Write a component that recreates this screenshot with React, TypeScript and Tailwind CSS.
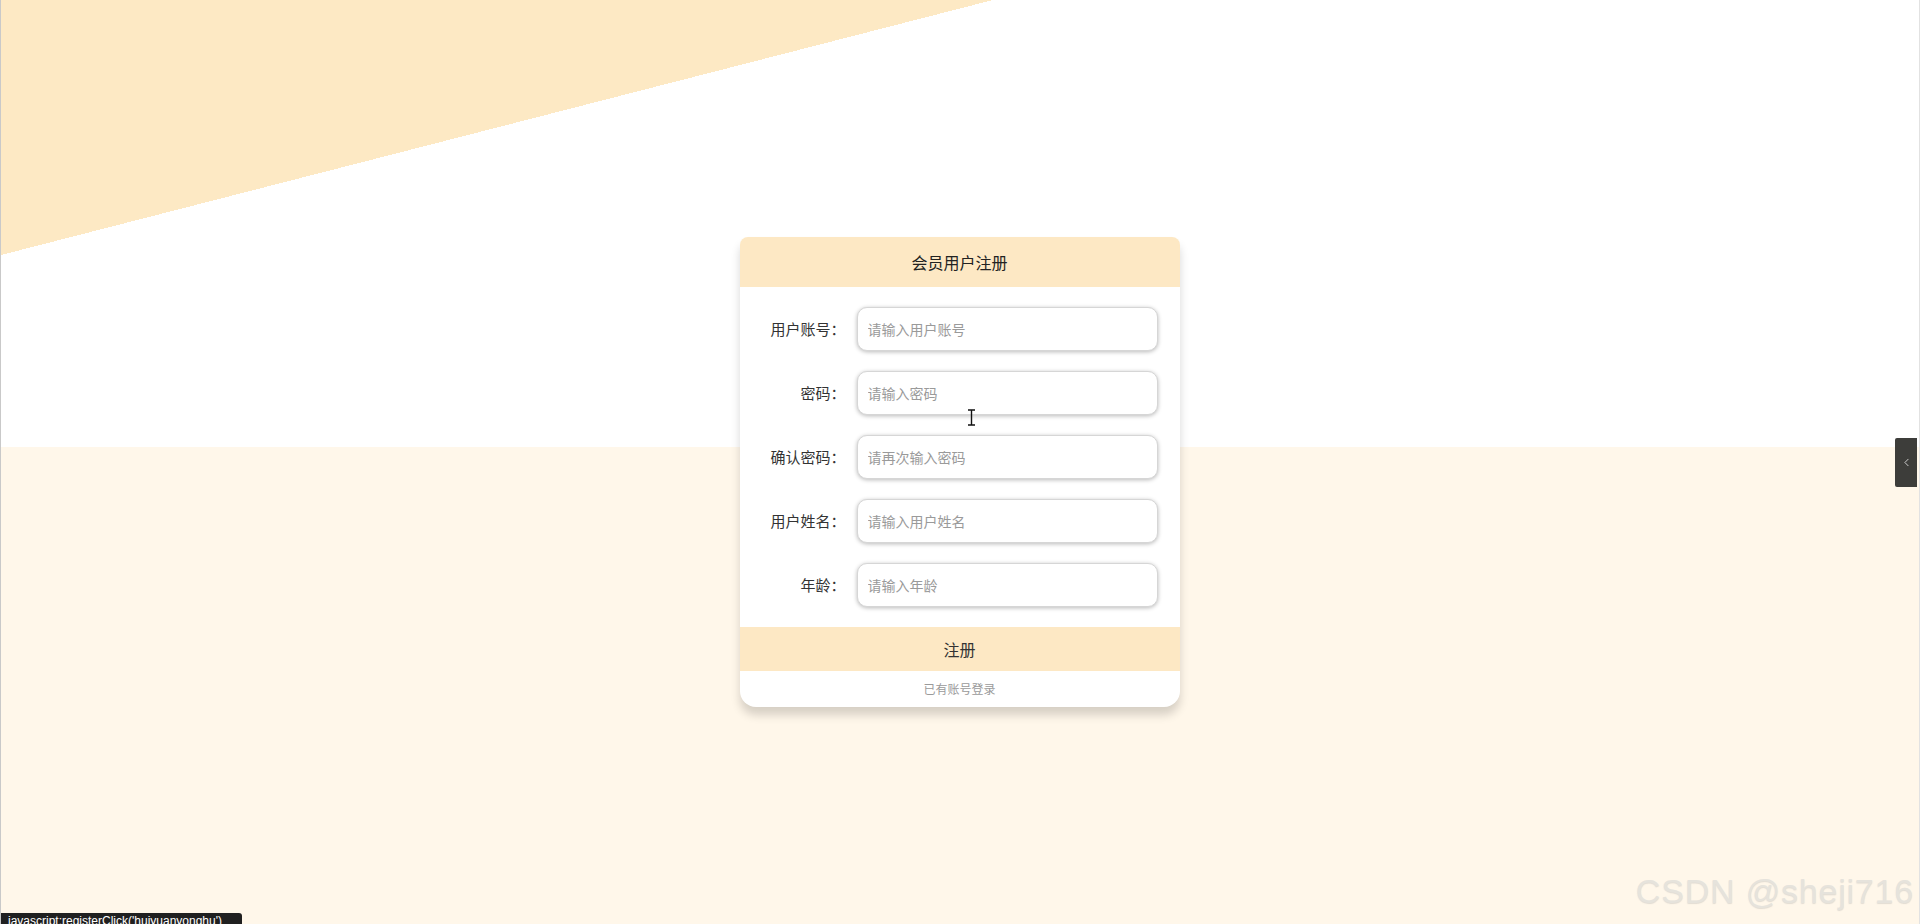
import React from "react";
import { ChevronLeft } from "lucide-react";

const fields = [
  { label: "用户账号：", placeholder: "请输入用户账号", type: "text" },
  { label: "密码：", placeholder: "请输入密码", type: "password" },
  { label: "确认密码：", placeholder: "请再次输入密码", type: "password" },
  { label: "用户姓名：", placeholder: "请输入用户姓名", type: "text" },
  { label: "年龄：", placeholder: "请输入年龄", type: "text" },
];

const font = "font-['Microsoft_YaHei','Noto_Sans_CJK_SC',sans-serif]";

function RegisterCard() {
  return (
    <div className="w-[440px] bg-white rounded-t-[8px] rounded-b-[16px] shadow-[0_8px_10px_rgba(0,0,0,0.16)] overflow-hidden">
      <div className="h-[50px] bg-[#fde8c4] flex items-center justify-center text-[16px] text-[#222]">
        会员用户注册
      </div>
      <div className="flex flex-col gap-[20px] py-[20px]">
        {fields.map((f) => (
          <div key={f.label} className="flex items-center">
            <label className="w-[106px] text-right text-[15px] text-[#333]">
              {f.label}
            </label>
            <input
              type={f.type}
              placeholder={f.placeholder}
              className="ml-[11px] w-[301px] h-[44px] rounded-[10px] border border-[#d6d6d6] bg-white px-[10px] text-[14px] text-[#333] placeholder:text-[#9a9a9a] shadow-[0_1px_4px_rgba(0,0,0,0.28)] outline-none"
            />
          </div>
        ))}
      </div>
      <button className="w-full h-[44px] bg-[#fde8c4] text-[16px] text-[#333]">
        注册
      </button>
      <div className="h-[36px] flex items-center justify-center text-[12px] text-[#9a9a9a]">
        已有账号登录
      </div>
    </div>
  );
}

export default function App() {
  return (
    <div
      className={`${font} relative w-full h-[924px] overflow-hidden grid border-l border-r border-l-[#c9c9c9] border-r-[#e2e2e2]`}
    >
      {/* background */}
      <div className="[grid-area:1/1] flex flex-col">
        <div className="h-[447px] bg-white">
          <div className="w-[992px] h-[255px] bg-[linear-gradient(to_bottom_right,#fde9c4_50%,transparent_50%)]" />
        </div>
        <div className="flex-1 bg-[#fff7ea]" />
      </div>

      {/* card */}
      <div className="[grid-area:1/1] flex items-start justify-center pt-[237px] pr-[1px]">
        <RegisterCard />
      </div>

      {/* text cursor */}
      <svg
        className="absolute left-[966px] top-[409px]"
        width="9"
        height="17"
        viewBox="0 0 9 17"
      >
        <path d="M1 1h7M4.5 1v15M1 16h7" stroke="#111" strokeWidth="1.4" fill="none" />
      </svg>

      {/* side tab */}
      <div className="absolute right-[2px] top-[438px] w-[22px] h-[49px] bg-[#3d3d3a] rounded-l-[2px] flex items-center justify-center">
        <ChevronLeft size={13} strokeWidth={1.6} className="text-[#e0e0e0]" />
      </div>

      {/* watermark */}
      <div className="absolute right-[5px] bottom-[16px] font-['Liberation_Sans',Arial,sans-serif] text-[34px] tracking-[0.8px] leading-none text-[#e6e3dc] [text-shadow:0_1px_1px_rgba(160,160,160,0.3)]">
        CSDN @sheji716
      </div>

      {/* status bar */}
      <div className="absolute left-0 bottom-0 w-[241px] h-[11px] overflow-hidden bg-[#202020] rounded-tr-[3px] pl-[7px] font-['Liberation_Sans',Arial,sans-serif] text-[12px] leading-[16px] text-white whitespace-nowrap">
        javascript:registerClick('huiyuanyonghu')
      </div>
    </div>
  );
}
